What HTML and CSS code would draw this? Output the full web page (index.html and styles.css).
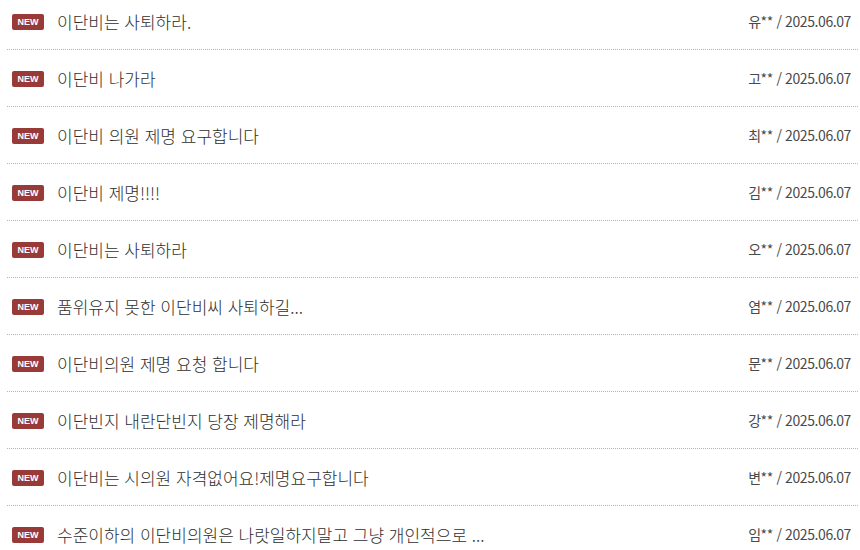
FILE: index.html
```html
<!DOCTYPE html>
<html lang="ko">
<head>
<meta charset="utf-8">
<link rel="stylesheet" href="styles.css">
</head>
<body>
<ul class="list">
  <li class="row"><span class="badge">NEW</span><span class="title">이단비는 사퇴하라.</span><span class="meta">유** / 2025.06.07</span></li>
  <li class="row"><span class="badge">NEW</span><span class="title">이단비 나가라</span><span class="meta">고** / 2025.06.07</span></li>
  <li class="row"><span class="badge">NEW</span><span class="title">이단비 의원 제명 요구합니다</span><span class="meta">최** / 2025.06.07</span></li>
  <li class="row"><span class="badge">NEW</span><span class="title">이단비 제명!!!!</span><span class="meta">김** / 2025.06.07</span></li>
  <li class="row"><span class="badge">NEW</span><span class="title">이단비는 사퇴하라</span><span class="meta">오** / 2025.06.07</span></li>
  <li class="row"><span class="badge">NEW</span><span class="title">품위유지 못한 이단비씨 사퇴하길...</span><span class="meta">염** / 2025.06.07</span></li>
  <li class="row"><span class="badge">NEW</span><span class="title">이단비의원 제명 요청 합니다</span><span class="meta">문** / 2025.06.07</span></li>
  <li class="row"><span class="badge">NEW</span><span class="title">이단빈지 내란단빈지 당장 제명해라</span><span class="meta">강** / 2025.06.07</span></li>
  <li class="row"><span class="badge">NEW</span><span class="title">이단비는 시의원 자격없어요!제명요구합니다</span><span class="meta">변** / 2025.06.07</span></li>
  <li class="row"><span class="badge">NEW</span><span class="title">수준이하의 이단비의원은 나랏일하지말고 그냥 개인적으로 ...</span><span class="meta">임** / 2025.06.07</span></li>
</ul>
</body>
</html>
```
FILE: styles.css
```css
html, body {
  margin: 0;
  padding: 0;
  background: #fff;
  overflow: hidden;
}
body {
  font-family: "Noto Sans CJK KR", "Noto Sans", sans-serif;
}
.list {
  list-style: none;
  margin: -7px 2px 0 7px;
  padding: 0;
}
.row {
  display: flex;
  align-items: center;
  height: 56px;
  padding: 0 7px 0 5px;
  border-bottom: 1px dotted #b5b5b5;
}
.badge {
  flex: none;
  width: 32px;
  height: 16px;
  line-height: 16px;
  margin-top: 1px;
  border-radius: 2px;
  background: #983a38;
  color: #fff;
  font-family: "Liberation Sans", Arial, sans-serif;
  font-size: 9px;
  font-weight: bold;
  text-align: center;
}
.title {
  flex: 1;
  margin-left: 13px;
  font-size: 17px;
  font-weight: 300;
  color: #2e2e2e;
  letter-spacing: 0;
  white-space: nowrap;
}
.meta {
  flex: none;
  font-size: 14px;
  color: #4a4a4a;
  letter-spacing: -0.4px;
}
```
